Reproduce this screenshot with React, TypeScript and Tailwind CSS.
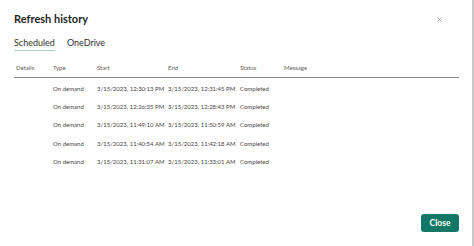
import { X } from 'lucide-react';

const rows = [
  { type: 'On demand', start: '3/15/2023, 12:30:13 PM', end: '3/15/2023, 12:31:45 PM', status: 'Completed' },
  { type: 'On demand', start: '3/15/2023, 12:26:35 PM', end: '3/15/2023, 12:28:43 PM', status: 'Completed' },
  { type: 'On demand', start: '3/15/2023, 11:49:10 AM', end: '3/15/2023, 11:50:59 AM', status: 'Completed' },
  { type: 'On demand', start: '3/15/2023, 11:40:54 AM', end: '3/15/2023, 11:42:18 AM', status: 'Completed' },
  { type: 'On demand', start: '3/15/2023, 11:31:07 AM', end: '3/15/2023, 11:33:01 AM', status: 'Completed' },
];

const cols = 'grid grid-cols-[37px_44px_71px_72px_44px_1fr]';

export default function App() {
  return (
    <div
      className="relative flex h-[246px] w-[474px] flex-col border-r-2 border-[#c8c8c8] bg-white text-[#323130]"
      style={{ fontFamily: 'Lato, "Noto Sans", sans-serif' }}
    >
      {/* Header */}
      <h1 className="px-[14px] pt-[11px] text-[11px] font-bold leading-[16px] text-[#252423]">Refresh history</h1>
      <button className="absolute right-[29px] top-[16px] text-[#605e5c]">
        <X size={7} strokeWidth={1.5} />
      </button>

      {/* Tabs */}
      <div className="mt-[10px] flex gap-[12px] px-[14px] text-[9px] leading-[12px]">
        <span className="border-b-[1.5px] border-[#a9d1c9] pb-[1px]">Scheduled</span>
        <span>OneDrive</span>
      </div>

      {/* Table */}
      <div className="mx-[14px] mt-[12px] w-[445px] whitespace-nowrap text-[6px] leading-[9px]">
        <div className={`${cols} border-b-[1.5px] border-[#8a8886] pb-[5px] pl-[2px] text-[#605e5c]`}>
          <span>Details</span>
          <span>Type</span>
          <span>Start</span>
          <span>End</span>
          <span>Status</span>
          <span>Message</span>
        </div>
        <div className="pt-[1px]">
          {rows.map((r, i) => (
            <div key={i} className={`${cols} h-[18.3px] items-center pl-[2px] text-[#484644]`}>
              <span />
              <span>{r.type}</span>
              <span>{r.start}</span>
              <span>{r.end}</span>
              <span>{r.status}</span>
              <span />
            </div>
          ))}
        </div>
      </div>

      {/* Footer */}
      <div className="mt-auto flex justify-end pr-[13px] pb-[14px]">
        <button className="h-[18px] w-[38px] rounded-[3px] bg-[#117865] text-[8.5px] font-bold text-white">
          Close
        </button>
      </div>
    </div>
  );
}
